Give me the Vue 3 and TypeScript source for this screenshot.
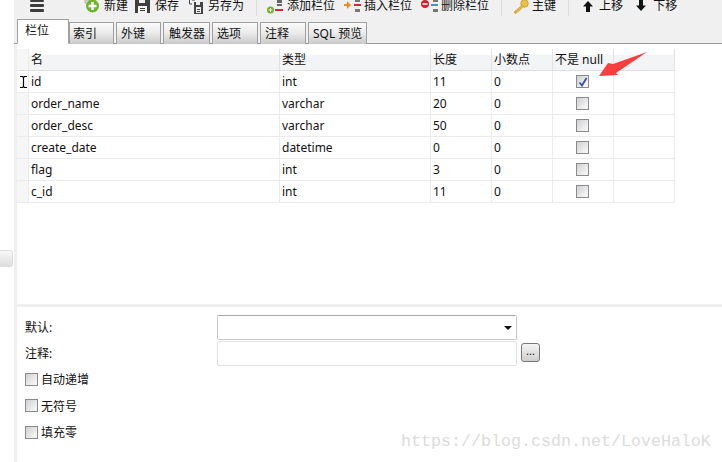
<script setup lang="ts">
const columns = ['名', '类型', '长度', '小数点', '不是 null', '']
const rows = [
  { name: 'id', type: 'int', len: '11', dec: '0', notNull: true },
  { name: 'order_name', type: 'varchar', len: '20', dec: '0', notNull: false },
  { name: 'order_desc', type: 'varchar', len: '50', dec: '0', notNull: false },
  { name: 'create_date', type: 'datetime', len: '0', dec: '0', notNull: false },
  { name: 'flag', type: 'int', len: '3', dec: '0', notNull: false },
  { name: 'c_id', type: 'int', len: '11', dec: '0', notNull: false },
]
const tabs = ['栏位', '索引', '外键', '触发器', '选项', '注释', 'SQL 预览']
const options = ['自动递增', '无符号', '填充零']
</script>

<template>
  <div class="page">
    <aside class="side">
      <div class="side-btn"></div>
    </aside>
    <div class="gutter"></div>
    <main class="main">
      <header class="toolbar">
        <div class="burger"><i></i><i></i><i></i></div>
        <div class="tool t-new">
          <svg width="16" height="14" viewBox="0 0 16 14"><path d="M1 0h5v3H1z" fill="#ddd" stroke="#999" stroke-width=".6"/><circle cx="8.500" cy="6" r="6.500" fill="#6cb52d"/><path d="M8.500 2v8M4.500 6h8" stroke="#fff" stroke-width="2.400"/></svg>
          <span>新建</span>
        </div>
        <div class="tool t-save">
          <svg width="15" height="13" viewBox="0 0 15 13"><path d="M0 0h15v13H0z" fill="#3f3f3f"/><path d="M4 0h6v3H4z" fill="#f0f0f0"/><path d="M3 6h9v7H3z" fill="#f4f4f4"/><path d="M5 8h5v1H5zM5 10h5v1H5z" fill="#3f3f3f"/></svg>
          <span>保存</span>
        </div>
        <div class="tool t-saveas">
          <svg width="15" height="14" viewBox="0 0 15 14"><path d="M.5 0v4H3M3 0h3" fill="none" stroke="#444"/><path d="M5 2h9v12H5z" fill="#444"/><path d="M7 2h4v3H7zM7 7h5v6H7z" fill="#f0f0f0"/><path d="M8 9h3v1H8zM8 11h3v1H8z" fill="#444"/></svg>
          <span>另存为</span>
        </div>
        <div class="sep s1"></div>
        <div class="tool t-add">
          <svg width="17" height="14" viewBox="0 0 17 14"><path d="M10 0h5v3h-5zM10 4h5v2h-5z" fill="#666"/><path d="M8 9h8v2H8z" fill="#e0203a"/><circle cx="3.500" cy="10" r="3.500" fill="#66b32a"/><path d="M3.500 8v4M1.500 10h4" stroke="#fff"/></svg>
          <span>添加栏位</span>
        </div>
        <div class="tool t-ins">
          <svg width="17" height="14" viewBox="0 0 17 14"><path d="M11 0h5v2h-5zM11 9h5v3h-5z" fill="#777"/><path d="M10 4h7v2h-7z" fill="#e0203a"/><path d="M0 4h3V1l4 4-4 4V6H0z" fill="#f08a1c"/></svg>
          <span>插入栏位</span>
        </div>
        <div class="tool t-del">
          <svg width="17" height="14" viewBox="0 0 17 14"><path d="M12 0h5v2h-5zM12 9h5v3h-5z" fill="#777"/><path d="M10 4h7v2h-7z" fill="#3e9ac4"/><circle cx="4" cy="4" r="4" fill="#d9202e"/><path d="M1.500 4h5" stroke="#fff" stroke-width="1.500"/></svg>
          <span>删除栏位</span>
        </div>
        <div class="sep s2"></div>
        <div class="tool t-key">
          <svg width="16" height="14" viewBox="0 0 16 14"><circle cx="11.500" cy="3.500" r="3.800" fill="#ecc14a" stroke="#b98a1c" stroke-width=".6"/><path d="M9 5 1 12l1 1.500 1.500-.5 1-1.500 1.500-.5 4.500-4.500z" fill="#e6b73a" stroke="#b98a1c" stroke-width=".5"/></svg>
          <span>主键</span>
        </div>
        <div class="sep s3"></div>
        <div class="tool t-up">
          <svg width="12" height="12" viewBox="0 0 12 12"><path d="M6 1 11 6.500H8V12H4V6.500H1z" fill="#111"/></svg>
          <span>上移</span>
        </div>
        <div class="tool t-down">
          <svg width="12" height="12" viewBox="0 0 12 12"><path d="M6 11 11 5.500H8V0H4v5.500H1z" fill="#111"/></svg>
          <span>下移</span>
        </div>
      </header>

      <nav class="tabs">
        <div v-for="(t, i) in tabs" :key="t" class="tab" :class="{ active: i === 0 }">{{ t }}</div>
      </nav>

      <section class="grid-area">
        <div class="grid">
          <div class="row head">
            <div class="mark"></div>
            <div v-for="(c, i) in columns" :key="i" class="cell" :class="'c' + i">{{ c }}</div>
          </div>
          <div v-for="(r, ri) in rows" :key="r.name" class="row">
            <div class="mark" :class="{ current: ri === 0 }"></div>
            <div class="cell c0">{{ r.name }}</div>
            <div class="cell c1">{{ r.type }}</div>
            <div class="cell c2">{{ r.len }}</div>
            <div class="cell c3">{{ r.dec }}</div>
            <div class="cell c4 center">
              <span class="check">
                <svg v-if="r.notNull" width="10" height="10" viewBox="0 0 10 10"><path d="M1.500 5.500 4 8.500 8.500 1" fill="none" stroke="#3c4f9c" stroke-width="1.800"/></svg>
              </span>
            </div>
            <div class="cell c5"></div>
          </div>
        </div>
        <svg class="arrow" width="52" height="28" viewBox="0 0 52 28"><path d="M50 2 19 23 21 25 2 26 11 13 16 14z" fill="#f9403f"/></svg>
        <svg class="ibeam" width="7" height="12" viewBox="0 0 7 12"><path d="M0 .5h2.500l1 1 1-1H7M0 11.500h2.500l1-1 1 1H7M3.500 1.500v9" fill="none" stroke="#000" stroke-width="1.200"/></svg>
      </section>

      <section class="props">
        <div class="form-row">
          <label>默认:</label>
          <div class="field select"><i class="caret"></i></div>
        </div>
        <div class="form-row second">
          <label>注释:</label>
          <div class="field"></div>
          <button class="dots" type="button">...</button>
        </div>
        <div class="opts">
          <div v-for="o in options" :key="o" class="opt"><span class="check"></span><span>{{ o }}</span></div>
        </div>
      </section>
    </main>
    <div class="watermark">https://blog.csdn.net/LoveHaloK</div>
  </div>
</template>

<style>
html, body { margin: 0; background: #fff; }
</style>

<style scoped>
.page {
  position: relative; display: flex; width: 722px; height: 462px; overflow: hidden;
  font: 12px "Noto Sans", "Noto Sans CJK SC", sans-serif; color: #111; background: #fff;
}
.side { width: 14px; flex: none; padding-top: 250px; box-sizing: border-box; }
.side-btn {
  width: 13px; height: 17px; box-sizing: border-box; border: 1px solid #ddd; border-left: 0;
  border-radius: 0 3px 3px 0; background: linear-gradient(#f8f8f8, #dedede);
}
.gutter { width: 3px; flex: none; background: #efefef; }
.main { flex: 1; min-width: 0; display: flex; flex-direction: column; position: relative; }
.toolbar {
  height: 19px; flex: none; position: relative; background: #f0f0f0; margin-left: -3px;
  display: flex; align-items: flex-start; padding-left: 16px;
}
.burger { width: 14px; display: flex; flex-direction: column; gap: 2px; margin-right: 40px; }
.burger i { height: 3px; background: #3c3c3c; border-radius: 1px; display: block; }
.burger i:first-child { height: 2px; }
.tool { display: flex; align-items: flex-start; gap: 4px; height: 13px; line-height: 12px; white-space: nowrap; }
.tool svg { flex: none; }
.t-save { margin-left: 7px; gap: 5px; }
.t-saveas { margin-left: 10px; gap: 4px; }
.sep { width: 1px; height: 16px; background: #dcdcdc; flex: none; }
.s1 { margin: 0 10px 0 12px; }
.t-add, .t-ins, .t-del { gap: 3px; }
.t-ins, .t-del { margin-left: 9px; }
.s2 { margin: 0 11px 0 12px; }
.t-key { gap: 3px; }
.s3 { margin: 0 13px 0 12px; }
.t-up { gap: 5px; }
.t-down { gap: 6px; margin-left: 12px; }

.tabs {
  height: 25px; box-sizing: border-box; flex: none; display: flex; align-items: flex-end; gap: 2px;
  background: #f0f0f0; border-bottom: 1px solid #9b9b9b; padding-left: 3px; position: relative; margin-left: -3px;
}
.tab {
  height: 22px; box-sizing: border-box; padding-left: 3px; width: 45px;
  line-height: 21px; border: 1px solid #a0a0a0; border-bottom: 0; margin-bottom: -1px;
  background: linear-gradient(#fafafa, #ececec 45%, #c9c9c9); white-space: nowrap; border-radius: 1px 1px 0 0;
}
.tab:nth-child(4) { width: 47px; padding-left: 5px; }
.tab:nth-child(3), .tab:nth-child(5), .tab:nth-child(6) { padding-left: 4px; }
.tab:nth-child(5), .tab:nth-child(6) { width: 46px; }
.tab:nth-child(7) { width: 59px; padding-left: 4px; }
.tab.active {
  width: 52px; height: 25px; line-height: 22px; background: #fff; margin-right: -2px;
  position: relative; border-bottom: 1px solid #fff; padding-left: 7px;
}

.grid-area { height: 260px; flex: none; position: relative; padding-top: 5px; box-sizing: border-box; background: #fff; }
.grid { width: 658px; }
.row { display: flex; height: 22px; box-sizing: border-box; border-bottom: 1px solid #ebebeb; }
.row.head { background: linear-gradient(#fff, #fff 25%, #f3f4f6 30%, #f3f4f6); border-bottom: 1px solid #dfdfdf; }
.mark { width: 12px; flex: none; background: #f6f6f6; border-right: 1px solid #ebebeb; box-sizing: border-box; }
.mark.current { background: #fff; }
.cell { box-sizing: border-box; border-right: 1px solid #ebebeb; padding-left: 2px; line-height: 21px; flex: none; }
.head .cell { border-right-color: #e2e2e2; }
.c0 { width: 251px; }
.c1 { width: 151px; }
.c2, .c3, .c4, .c5 { width: 61px; }
.center { display: flex; align-items: center; justify-content: center; padding: 0 1px 0 0; }
.check {
  width: 13px; height: 13px; box-sizing: border-box; display: inline-flex; align-items: center; justify-content: center;
  border: 1px solid #8a8a8a; background: linear-gradient(135deg, #d0d0d4, #f5f5f5 85%); flex: none;
}
.arrow { position: absolute; left: 580px; top: 6px; }
.ibeam { position: absolute; left: 3px; top: 32px; }

.props { flex: 1; border-top: 3px solid #efefef; position: relative; padding: 8px 0 0 8px; }
.form-row { display: flex; align-items: center; height: 24px; }
.form-row.second { margin-top: 2px; }
.form-row label { width: 192px; flex: none; }
.field {
  width: 300px; height: 25px; box-sizing: border-box; border: 1px solid #e0e0e8; border-radius: 2px; background: #fff;
  position: relative; flex: none;
}
.select { border-color: #c8c8c8; border-top-color: #a8a8a8; }
.caret {
  position: absolute; right: 4px; top: 10px; width: 0; height: 0;
  border: 4px solid transparent; border-top: 4px solid #111; border-bottom: 0;
}
.dots {
  width: 19px; height: 19px; margin: -2px 0 0 4px; padding: 0 0 2px; box-sizing: border-box;
  border: 1px solid #777; border-radius: 3px; background: linear-gradient(#f4f4f4, #cfcfcf);
  font: 11px "Noto Sans", sans-serif; line-height: 10px; color: #222;
}
.opts { display: flex; flex-direction: column; gap: 12.5px; margin-top: 7px; }
.opt { display: flex; align-items: center; gap: 3px; height: 14px; }
.watermark {
  position: absolute; left: 401px; top: 432px; font: 16.67px "Liberation Mono", monospace;
  color: #dcdcdc; white-space: nowrap;
}
</style>
